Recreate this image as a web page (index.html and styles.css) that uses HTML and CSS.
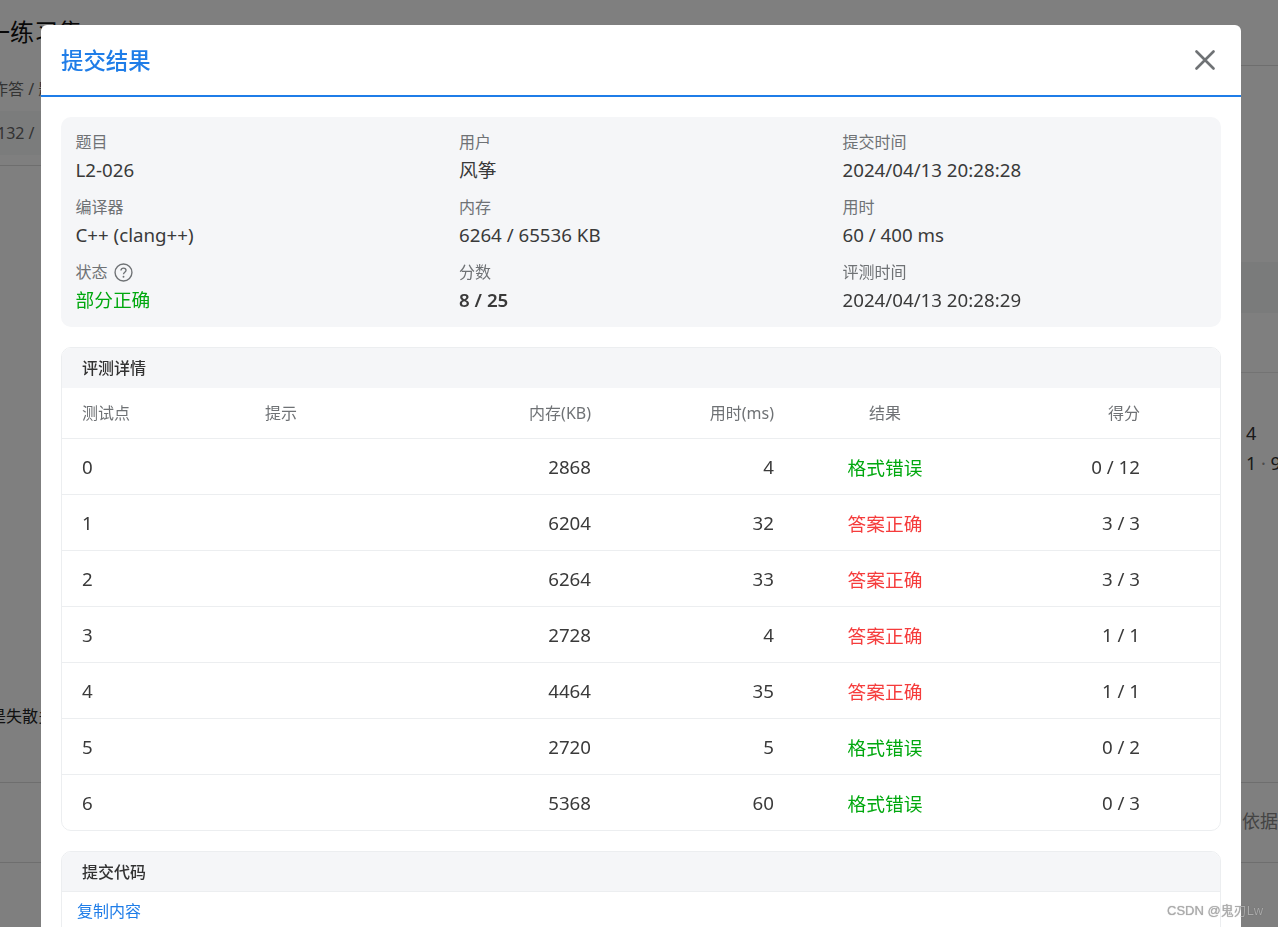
FILE: index.html
```html
<!DOCTYPE html>
<html lang="zh-CN">
<head>
<meta charset="utf-8">
<title>提交结果</title>
<link rel="stylesheet" href="styles.css">
</head>
<body>
<div class="page">
  <div class="bg-title">一练习集</div>
  <div class="bg-crumb">作答 / 题</div>
  <div class="bg-crumb2">132 /</div>
  <div class="bg-rule"></div>
  <div class="bg-right r1"></div>
  <div class="bg-right r2"></div>
  <div class="bg-right r3"></div>
  <div class="bg-nums"><div>4</div><div>1 <i>·</i> 9</div></div>
  <div class="bg-left">是失散多</div>
  <div class="bg-basis">依据</div>
  <div class="bg-line l1"></div>
  <div class="bg-line l2"></div>
</div>
<div class="overlay"></div>
<div class="modal">
  <header class="modal-head">
    <h2>提交结果</h2>
    <svg class="close" width="20" height="20" viewBox="0 0 20 20"><path d="M1.5 1.5 18.5 18.5M18.5 1.5 1.5 18.5" stroke="#6f7275" stroke-width="2.6" fill="none" stroke-linecap="round"/></svg>
  </header>
  <div class="modal-body">
    <section class="summary">
      <div class="cell"><div class="k">题目</div><div class="v">L2-026</div></div>
      <div class="cell"><div class="k">用户</div><div class="v">风筝</div></div>
      <div class="cell"><div class="k">提交时间</div><div class="v">2024/04/13 20:28:28</div></div>
      <div class="cell"><div class="k">编译器</div><div class="v">C++ (clang++)</div></div>
      <div class="cell"><div class="k">内存</div><div class="v">6264 / 65536 KB</div></div>
      <div class="cell"><div class="k">用时</div><div class="v">60 / 400 ms</div></div>
      <div class="cell"><div class="k">状态 <svg class="help" width="19" height="19" viewBox="0 0 18 18"><circle cx="9" cy="9" r="8" fill="none" stroke="#6f7275" stroke-width="1.3"/><path d="M6.6 7.1C6.6 5.7 7.7 4.8 9 4.8c1.4 0 2.4.9 2.4 2.1 0 1.9-2.4 1.9-2.4 3.8" fill="none" stroke="#6f7275" stroke-width="1.3"/><circle cx="9" cy="13" r=".9" fill="#6f7275"/></svg></div><div class="v green">部分正确</div></div>
      <div class="cell"><div class="k">分数</div><div class="v b">8 / 25</div></div>
      <div class="cell"><div class="k">评测时间</div><div class="v">2024/04/13 20:28:29</div></div>
    </section>
    <section class="card">
      <div class="card-head">评测详情</div>
      <table>
        <thead>
          <tr><th class="c1">测试点</th><th class="c2">提示</th><th class="c3">内存(KB)</th><th class="c4">用时(ms)</th><th class="c5">结果</th><th class="c6">得分</th></tr>
        </thead>
        <tbody>
          <tr><td class="c1">0</td><td class="c2"></td><td class="c3">2868</td><td class="c4">4</td><td class="c5 green">格式错误</td><td class="c6">0 / 12</td></tr>
          <tr><td class="c1">1</td><td class="c2"></td><td class="c3">6204</td><td class="c4">32</td><td class="c5 red">答案正确</td><td class="c6">3 / 3</td></tr>
          <tr><td class="c1">2</td><td class="c2"></td><td class="c3">6264</td><td class="c4">33</td><td class="c5 red">答案正确</td><td class="c6">3 / 3</td></tr>
          <tr><td class="c1">3</td><td class="c2"></td><td class="c3">2728</td><td class="c4">4</td><td class="c5 red">答案正确</td><td class="c6">1 / 1</td></tr>
          <tr><td class="c1">4</td><td class="c2"></td><td class="c3">4464</td><td class="c4">35</td><td class="c5 red">答案正确</td><td class="c6">1 / 1</td></tr>
          <tr><td class="c1">5</td><td class="c2"></td><td class="c3">2720</td><td class="c4">5</td><td class="c5 green">格式错误</td><td class="c6">0 / 2</td></tr>
          <tr><td class="c1">6</td><td class="c2"></td><td class="c3">5368</td><td class="c4">60</td><td class="c5 green">格式错误</td><td class="c6">0 / 3</td></tr>
        </tbody>
      </table>
    </section>
    <section class="card code">
      <div class="card-head">提交代码</div>
      <a class="copy">复制内容</a>
    </section>
  </div>
</div>
<div class="watermark">CSDN @鬼刃Lw</div>
</body>
</html>
```
FILE: styles.css
```css
* { box-sizing: border-box; }
html, body { margin: 0; height: 927px; overflow: hidden; }
body { font-family: "Noto Sans", "Noto Sans CJK SC", sans-serif; color: #333; background: #fff; }
.page { position: absolute; inset: 0; overflow: hidden; background: #fff; }
.bg-title { position: absolute; left: -14px; top: 15px; font-size: 24px; line-height: 34px; color: #111; }
.bg-crumb { position: absolute; left: -8px; top: 66px; width: 200px; height: 45px; line-height: 47px; font-size: 16px; color: #666; }
.bg-crumb2 { position: absolute; left: -3px; top: 111px; width: 200px; height: 44px; line-height: 44px; font-size: 16px; color: #666; background: #f7f8f9; }
.bg-rule { position: absolute; left: 0; top: 165px; width: 100px; height: 1px; background: #ddd; }
.bg-right { position: absolute; left: 1241px; width: 40px; }
.r1 { top: 65px; height: 1px; background: #ddd; }
.r2 { top: 262px; height: 51px; background: #f5f6f7; }
.r3 { top: 372px; height: 1px; background: #e6e6e6; }
.bg-nums { position: absolute; left: 1246px; top: 418px; font-size: 18px; line-height: 30px; color: #333; white-space: nowrap; }
.bg-nums i { color: #999; font-style: normal; }
.bg-left { position: absolute; left: -10px; top: 705px; font-size: 16px; line-height: 22px; color: #222; white-space: nowrap; }
.bg-basis { position: absolute; left: 1242px; top: 807px; font-size: 18px; line-height: 28px; color: #888; white-space: nowrap; }
.bg-line { position: absolute; left: 0; right: 0; height: 1px; background: #ddd; }
.l1 { top: 782px; }
.l2 { top: 862px; }
.overlay { position: fixed; inset: 0; background: rgba(0,0,0,.5); }
.modal { position: absolute; left: 41px; top: 25px; width: 1200px; height: 902px; overflow: hidden; background: #fff; border-radius: 6px 6px 0 0; }
.modal-head { height: 72px; border-bottom: 2px solid #1f7de8; display: flex; align-items: center; justify-content: space-between; padding: 0 26px 0 20px; }
.modal-head h2 { margin: 1px 0 0; font-size: 22.4px; font-weight: 500; color: #1f7de8; line-height: 32px; }
.close { display: block; margin-top: -1px; }
.modal-body { padding: 20px; display: flex; flex-direction: column; gap: 20px; }
.summary { height: 210px; background: #f5f6f8; border-radius: 10px; padding: 13px 14.5px 0; display: grid; grid-template-columns: 383.5px 383.5px 1fr; grid-auto-rows: 65px; }
.k { font-size: 16px; line-height: 25px; color: #6f7275; display: flex; align-items: center; gap: 6px; }
.v { font-size: 18.72px; line-height: 30px; color: #3a3a3a; }
.v.b { font-weight: 600; }
.green { color: #00a80e !important; }
.red { color: #f53c3c !important; }
.card { border: 1px solid #eceef0; border-radius: 10px; overflow: hidden; }
.card-head { height: 40px; background: #f5f6f8; padding-left: 20px; font-size: 16px; line-height: 40px; font-weight: 500; color: #333; }
table { width: 100%; border-collapse: collapse; table-layout: fixed; }
th { height: 50px; padding-bottom: 2px !important; font-size: 16px; font-weight: 400; color: #6f7275; }
td { height: 56px; font-size: 18.72px; color: #3a3a3a; border-top: 1px solid #eceef0; }
.c1 { width: 203px; padding: 0 0 0 20px; text-align: left; }
.c2 { width: 176px; text-align: left; padding: 0; }
.c3 { width: 150px; text-align: right; padding: 0; }
.c4 { width: 183px; text-align: right; padding: 0; }
.c5 { width: 222px; text-align: center; padding: 0; }
.c6 { width: 224px; text-align: right; padding: 0 80px 0 0; }
.code .card-head { border-bottom: 1px solid #eceef0; }
.code { height: 200px; }
.copy { display: block; padding: 7px 15px; font-size: 16px; line-height: 24px; color: #1f7de8; }
.watermark { position: absolute; left: 1167px; top: 902px; font-size: 13px; line-height: 18px; color: #ababab; text-shadow: 0 0 1px rgba(0,0,0,.35); white-space: nowrap; font-family: "Liberation Sans", "Noto Sans CJK SC", sans-serif; }
```
